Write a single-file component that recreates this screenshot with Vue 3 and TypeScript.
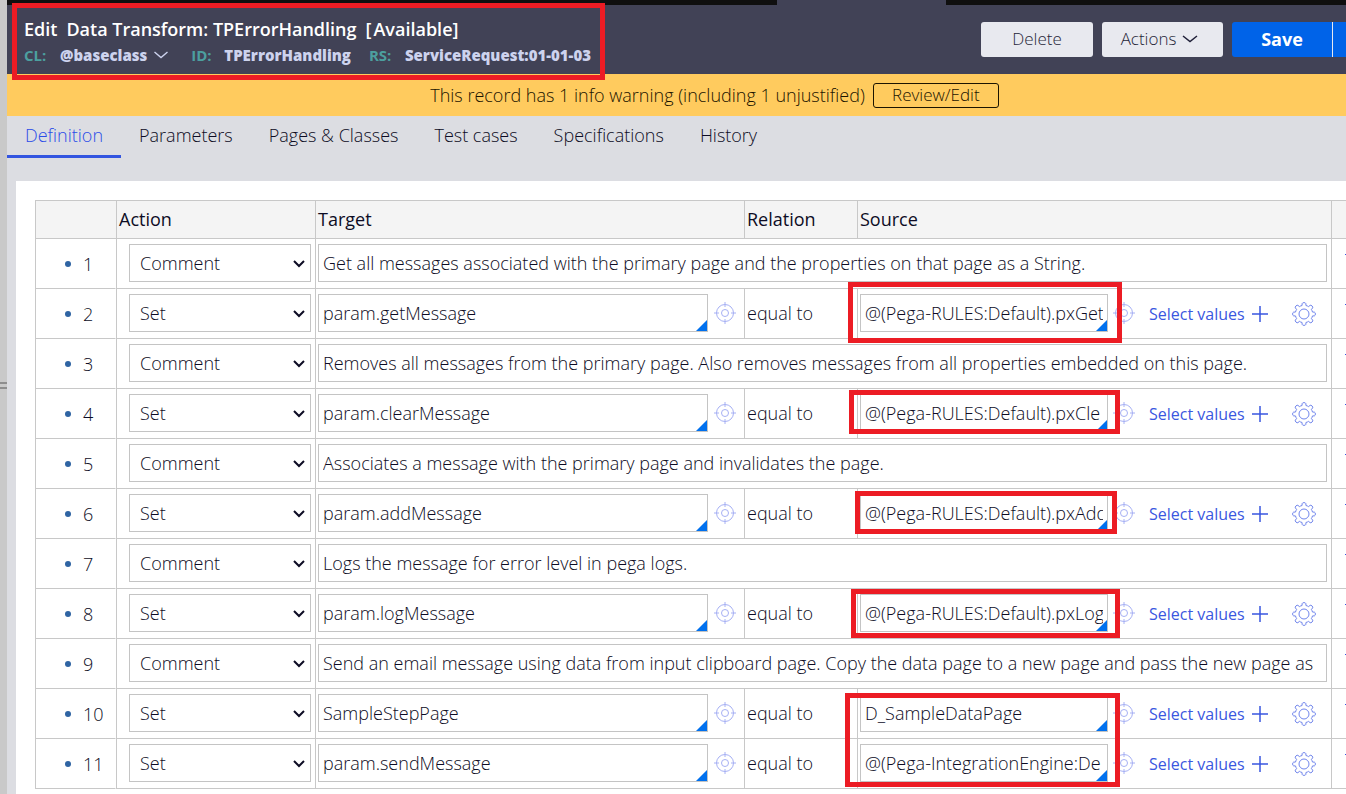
<script setup lang="ts">
import { ref } from 'vue'

interface Mark { left: number; top: number; width: number; height: number }
interface Step {
  action: 'Comment' | 'Set'
  target: string
  source?: string
  mark?: Mark
}

const tabs = ['Definition', 'Parameters', 'Pages & Classes', 'Test cases', 'Specifications', 'History']
const activeTab = ref('Definition')

const steps = ref<Step[]>([
  { action: 'Comment', target: 'Get all messages associated with the primary page and the properties on that page as a String.' },
  { action: 'Set', target: 'param.getMessage', source: '@(Pega-RULES:Default).pxGetMessagesAsString', mark: { left: -10, top: -7, width: 274, height: 61 } },
  { action: 'Comment', target: 'Removes all messages from the primary page. Also removes messages from all properties embedded on this page.' },
  { action: 'Set', target: 'param.clearMessage', source: '@(Pega-RULES:Default).pxCle', mark: { left: -9, top: 1, width: 271, height: 44 } },
  { action: 'Comment', target: 'Associates a message with the primary page and invalidates the page.' },
  { action: 'Set', target: 'param.addMessage', source: '@(Pega-RULES:Default).pxAddMessageToPage', mark: { left: -3, top: 2, width: 262, height: 43 } },
  { action: 'Comment', target: 'Logs the message for error level in pega logs.' },
  { action: 'Set', target: 'param.logMessage', source: '@(Pega-RULES:Default).pxLogMessage', mark: { left: -7, top: 0, width: 269, height: 49 } },
  { action: 'Comment', target: 'Send an email message using data from input clipboard page. Copy the data page to a new page and pass the new page as' },
  { action: 'Set', target: 'SampleStepPage', source: 'D_SampleDataPage', mark: { left: -13, top: 4, width: 275, height: 94 } },
  { action: 'Set', target: 'param.sendMessage', source: '@(Pega-IntegrationEngine:De' },
])

function markStyle(m: Mark) {
  return { left: `${m.left}px`, top: `${m.top}px`, width: `${m.width}px`, height: `${m.height}px` }
}

// Outline of an eight-toothed gear centred in a 24 by 24 box.
function gearOutline(): string {
  const at = (deg: number, r: number) => {
    const a = (deg * Math.PI) / 180
    return `${(12 + r * Math.sin(a)).toFixed(2)} ${(12 - r * Math.cos(a)).toFixed(2)}`
  }
  let d = ''
  for (let k = 0; k < 8; k++) {
    const a = k * 45
    d += `${k ? 'A8.5 8.5 0 0 1' : 'M'} ${at(a - 13, 8.7)}`
    d += `L${at(a - 10, 10.6)}Q${at(a - 8, 11.4)} ${at(a, 11.4)}Q${at(a + 8, 11.4)} ${at(a + 10, 10.6)}L${at(a + 13, 8.7)}`
  }
  return `${d}A8.5 8.5 0 0 1 ${at(347, 8.7)}Z`
}
const gearPath = gearOutline()
</script>

<template>
  <div class="workspace">
    <svg width="0" height="0" class="defs" aria-hidden="true">
      <symbol id="target" viewBox="0 0 22 22">
        <g fill="none" stroke="currentColor">
          <circle cx="11" cy="11" r="8.5" />
          <circle cx="11" cy="11" r="3.5" />
          <path d="M11 0v5M11 17v5M0 11h5M17 11h5" />
        </g>
      </symbol>
      <symbol id="gear" viewBox="0 0 24 24">
        <g fill="none" stroke="currentColor" stroke-linejoin="round">
          <path :d="gearPath" />
          <circle cx="12" cy="12" r="5" />
        </g>
      </symbol>
    </svg>

    <aside class="splitter"><span class="grip"></span></aside>

    <main class="record">
      <header class="top">
        <div class="stripe"><span class="black"></span><span class="open-tab"></span><span class="black rest"></span></div>
        <div class="bar">
          <div class="identity">
            <h1><span>Edit</span> <span>Data Transform: TPErrorHandling</span> <span class="status">[<span>Available]</span></span></h1>
            <div class="keys">
              <span class="key">CL:</span>
              <button class="cls" type="button">@baseclass
                <svg width="14" height="8" viewBox="0 0 14 8"><path d="M.5 1 7 6.500 13.500 1" fill="none" stroke="currentColor" stroke-width="1.400" /></svg>
              </button>
              <span class="key id">ID:</span><span class="val">TPErrorHandling</span>
              <span class="key rs">RS:</span><span class="val">ServiceRequest:01-01-03</span>
            </div>
          </div>
          <div class="buttons">
            <button class="btn delete" type="button">Delete</button>
            <button class="btn actions" type="button">Actions
              <svg width="16" height="8" viewBox="0 0 16 8"><path d="M1 1l7 5.500L15 1" fill="none" stroke="currentColor" stroke-width="1.500" /></svg>
            </button>
            <div class="save-group">
              <button class="btn save" type="button">Save</button>
              <button class="btn more" type="button" aria-label="More save options"></button>
            </div>
          </div>
        </div>
        <div class="mark title-mark"></div>
      </header>

      <div class="warning">
        <span>This record has 1 info warning (including 1 unjustified)</span>
        <button type="button">Review/Edit</button>
      </div>

      <nav class="tabs">
        <button v-for="t in tabs" :key="t" type="button" :class="{ active: t === activeTab }" @click="activeTab = t">{{ t }}</button>
      </nav>

      <section class="panel">
        <table>
          <colgroup>
            <col class="c-index"><col class="c-action"><col><col class="c-relation"><col class="c-source"><col class="c-tail">
          </colgroup>
          <thead>
            <tr><th></th><th>Action</th><th>Target</th><th>Relation</th><th>Source</th><th></th></tr>
          </thead>
          <tbody>
            <tr v-for="(s, i) in steps" :key="i">
              <td class="index"><div class="cell"><i class="dot"></i><span>{{ i + 1 }}</span></div></td>
              <td class="action">
                <div class="select">
                  <select v-model="s.action" :aria-label="`Action ${i + 1}`">
                    <option>Comment</option>
                    <option>Set</option>
                  </select>
                  <svg width="12" height="8" viewBox="0 0 12 8"><path d="M1 1l5 5 5-5" fill="none" stroke="currentColor" stroke-width="2" /></svg>
                </div>
              </td>
              <td v-if="s.action === 'Comment'" colspan="3" class="field">
                <div class="cell"><input v-model="s.target" type="text" :aria-label="`Comment ${i + 1}`"></div>
              </td>
              <template v-else>
                <td class="field">
                  <div class="cell target">
                    <div class="combo"><input v-model="s.target" type="text" :aria-label="`Target ${i + 1}`"></div>
                    <button class="icon pick" type="button" aria-label="Open target"><svg width="22" height="22"><use href="#target" /></svg></button>
                  </div>
                </td>
                <td class="relation">equal to</td>
                <td class="field source">
                  <div class="cell">
                    <div class="combo"><input v-model="s.source" type="text" :aria-label="`Source ${i + 1}`"></div>
                    <button class="icon pick" type="button" aria-label="Open source"><svg width="22" height="22"><use href="#target" /></svg></button>
                    <a href="#" class="values">Select values
                      <svg width="16" height="16" viewBox="0 0 16 16"><path d="M8 0v16M0 8h16" stroke="currentColor" stroke-width="1.500" /></svg>
                    </a>
                    <button class="icon gear" type="button" aria-label="Settings"><svg width="24" height="24"><use href="#gear" /></svg></button>
                  </div>
                  <div v-if="s.mark" class="mark" :style="markStyle(s.mark)"></div>
                </td>
              </template>
              <td class="tail">
                <button class="icon" type="button" aria-label="Delete row">
                  <svg width="18" height="20" viewBox="0 0 18 20"><path d="M0 3.500h18M6 3V1h6v2M3 4l1 15h10l1-15" fill="none" stroke="currentColor" /></svg>
                </button>
              </td>
            </tr>
          </tbody>
        </table>
      </section>
    </main>
  </div>
</template>

<style>
body { overflow: hidden; }
</style>

<style scoped>
.workspace {
  display: flex;
  min-height: 100vh;
  font-family: "Open Sans", sans-serif;
  font-size: 18px;
  font-weight: 300;
  line-height: 24px;
  color: #0d0c24;
  background: #dcdde2;
}
.workspace * { box-sizing: border-box; }
.defs { position: absolute; }
button, input, select { font: inherit; color: inherit; margin: 0; }
button { padding: 0; border: 0; background: none; cursor: pointer; }
svg { display: block; flex: none; }

.splitter { flex: 0 0 7px; display: flex; align-items: center; height: 100vh; background: #c9c9c9; }
.grip { width: 7px; height: 7px; margin-top: -24px; border: solid #8e8e8e; border-width: 2px 0; }
.record { flex: 1; min-width: 0; }

.top { position: relative; background: #414256; }
.stripe { display: flex; height: 5px; }
.black { flex: 0 0 770px; background: #0f0f0f; }
.open-tab { flex: 0 0 169px; }
.black.rest { flex: 1; }
.bar { display: flex; justify-content: space-between; height: 69px; padding-left: 17px; }
.identity { padding-top: 12px; white-space: nowrap; }
h1 { display: flex; gap: 9px; margin: 0; font-size: 18px; font-weight: 600; line-height: 24px; color: #fff; }
.status { display: flex; gap: 2px; }
.keys { display: flex; align-items: center; margin-top: 2px; font-size: 15px; font-weight: 800; line-height: 24px; color: #cdd3ee; }
.key { color: #4c9f9f; font-weight: 700; width: 36px; }
.cls { display: flex; align-items: center; gap: 7px; }
.key.id { margin-left: 23px; width: 33px; }
.rs { margin-left: 18px; }
.buttons { display: flex; padding-top: 17px; }
.btn { height: 35px; padding-bottom: 2px; border-radius: 3px; background: #e8e9ef; color: #1f1f38; font-size: 17px; }
.delete { width: 112px; margin-right: 9px; }
.actions { display: flex; align-items: center; justify-content: center; gap: 6px; width: 121px; margin-right: 9px; padding-right: 6px; }
.save-group { display: flex; gap: 1px; height: 35px; background: linear-gradient(90deg, transparent 50%, #e8e9ef 50%); }
.btn.save { width: 100px; border-radius: 3px 0 0 3px; background: #0063e8; color: #fff; font-size: 18px; font-weight: 700; }
.btn.more { width: 13px; border-radius: 0; background: #0063e8; }

.mark { position: absolute; z-index: 2; border: 5px solid #ec1c24; pointer-events: none; }
.title-mark { left: 5px; top: 3px; width: 593px; height: 77px; }

.warning { display: flex; align-items: center; justify-content: center; gap: 8px; height: 42px; padding-left: 76px; background: #ffcb5e; color: #1c1400; }
.warning button { width: 126px; height: 25px; border: 1px solid #1c1400; border-radius: 3px; font-size: 17px; line-height: 20px; }

.tabs { display: flex; height: 65px; }
.tabs button { height: 42px; padding: 0 18px 2px; border-bottom: 3px solid transparent; white-space: nowrap; }
.tabs .active { color: #2a4ce8; border-bottom-color: #3355e0; }

.panel { margin-left: 9px; padding: 19px 0 40px 19px; background: #fff; overflow: hidden; }
table { width: 100%; table-layout: fixed; border-collapse: separate; border-spacing: 0; }
.c-index { width: 81px; }
.c-action { width: 199px; }
.c-relation { width: 113px; }
.c-source { width: 474px; }
.c-tail { width: 15px; }
th { height: 39px; padding: 0 2px 2px; border: solid #c8c8c8; border-width: 1px 0 1px 1px; background: #f4f4f4; font-weight: 400; text-align: left; }
td { height: 50px; padding: 0 0 1px; border: solid #c8c8c8; border-width: 0 0 1px 1px; }
.index { padding: 0; border-right: 1px solid #fff; }
.cell { display: flex; align-items: center; }
.index .cell { padding-left: 29px; }
.dot { width: 6px; height: 6px; margin-right: 12px; border-radius: 50%; background: #2f64a3; }
.action { padding: 0 4px 1px 12px; }
.select { position: relative; }
.select svg { position: absolute; right: 6px; top: 16px; pointer-events: none; }
select { display: block; appearance: none; width: 100%; height: 38px; padding: 0 24px 0 10px; border: 1px solid #c4c4c4; border-radius: 0; background: #fff; }
input { display: block; width: 100%; height: 38px; padding: 0 4px; border: 1px solid #c4c4c4; border-radius: 0; background: #fff; }
.field { padding: 0 4px 1px 2px; }
.combo { position: relative; flex: 1; }
.combo::after { content: ""; position: absolute; right: 1px; bottom: 1px; border: solid transparent; border-width: 0 0 11px 11px; border-bottom-color: #0070ee; }
.pick { margin-left: 6px; color: #a6b0f4; }
.target { padding-right: 4px; }
.relation { padding-left: 2px; }
.source { position: relative; }
.source .combo { flex: 0 0 248px; }
.source .pick { margin-left: 5px; }
.values { display: flex; align-items: center; gap: 7px; margin-left: 14px; padding-top: 1px; color: #3a57e0; font-size: 16px; font-weight: 400; text-decoration: none; white-space: nowrap; }
.gear { margin-left: 24px; padding-top: 1px; color: #7085ec; }
.tail { padding-left: 13px; color: #3a57e0; }
</style>
